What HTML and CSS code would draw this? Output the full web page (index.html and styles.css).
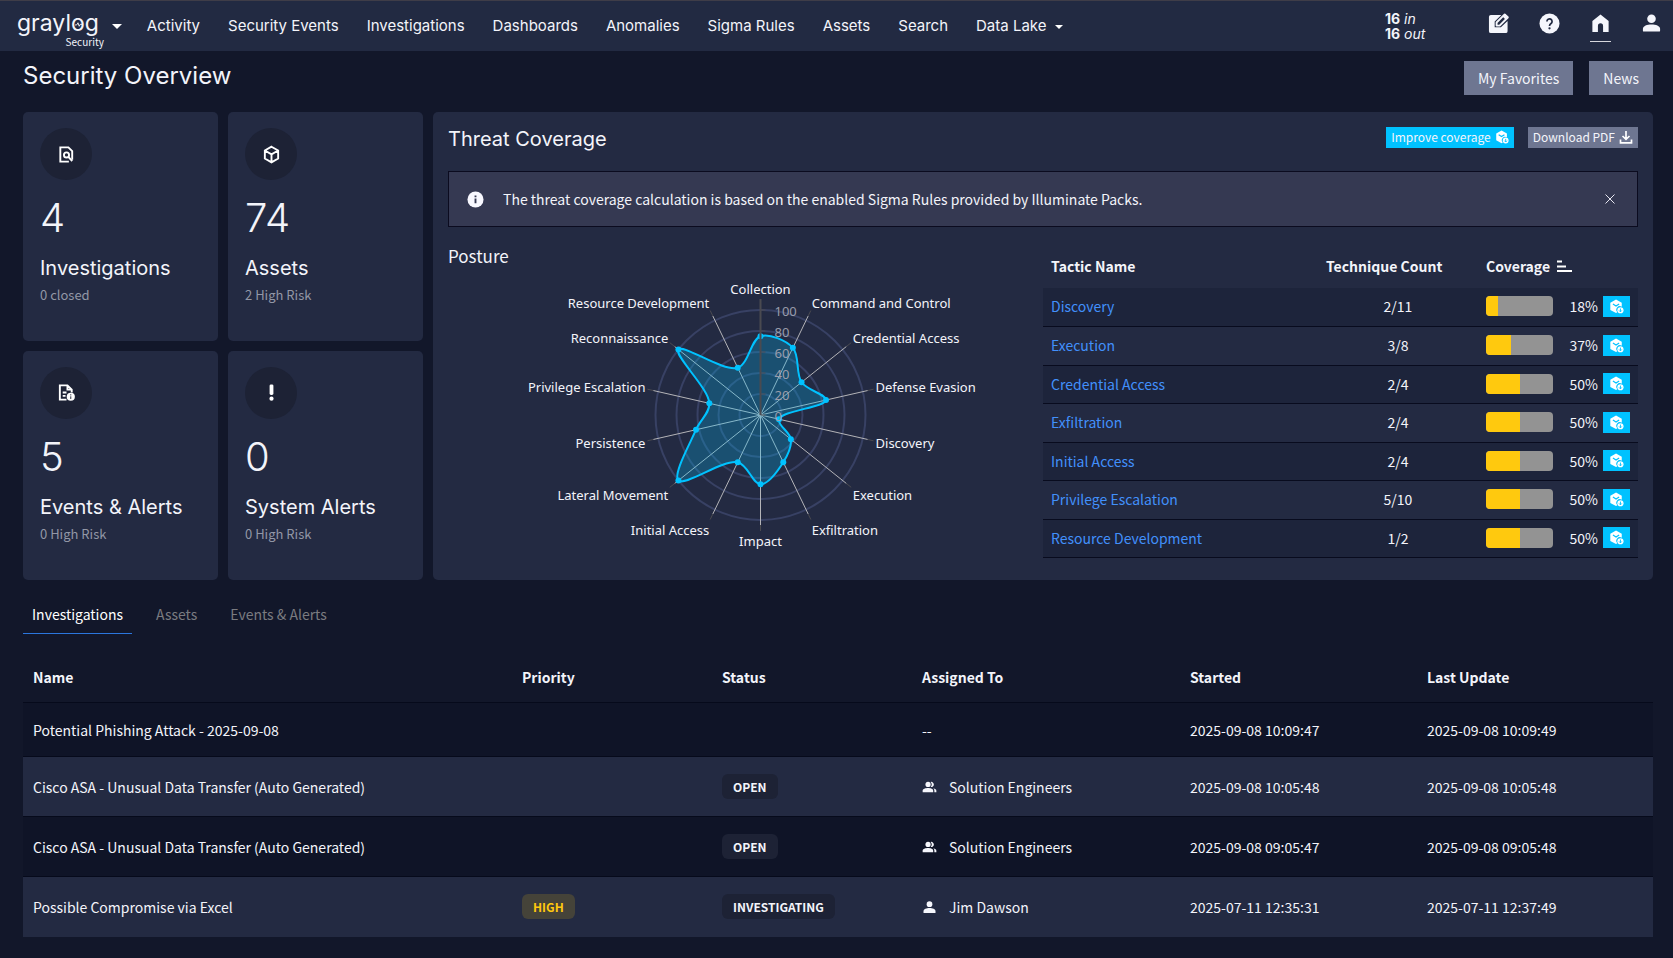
FILE: index.html
```html
<!DOCTYPE html>
<html lang="en">
<head>
<meta charset="utf-8">
<title>Security Overview</title>
<link rel="stylesheet" href="styles.css">
</head>
<body>
<svg class="sprite" aria-hidden="true">
  <symbol id="pack" viewBox="0 0 16 16">
    <path fill="#fff" d="M7.500 0.600 13.600 4v4.300a3.800 3.800 0 0 0-4.700 5.900L7.500 15 1.400 11.600V4z"/>
    <path fill="none" stroke="#00c2ff" stroke-width="1.300" d="M4.200 5.400 7.500 7.400l3.300-2"/>
    <circle cx="12.200" cy="12" r="3.300" fill="#fff"/>
    <path fill="none" stroke="#00c2ff" stroke-width="1" d="M12.200 10.200v3.400M10.700 12.200l1.500 1.500 1.500-1.500"/>
  </symbol>
  <symbol id="group" viewBox="0 0 16 14">
    <circle cx="6.300" cy="4" r="3"/>
    <path d="M0 13v-1.700C0 9 3.300 8.100 6.300 8.100s6 .9 6 3.200V13z"/>
    <path d="M9.300 1.100a3 3 0 1 1 0 5.800 4.300 4.300 0 0 0 0-5.800zM12.500 8.500c2 .5 3.500 1.400 3.500 2.800V13h-2.300v-1.700c0-1.200-.5-2.100-1.200-2.800z"/>
  </symbol>
  <symbol id="person" viewBox="0 0 16 16">
    <circle cx="8" cy="4.200" r="3.800"/>
    <path d="M0 16v-2.600C0 10.600 4 9.200 8 9.200s8 1.400 8 4.200V16z"/>
  </symbol>
</svg>

<header class="topbar">
  <button class="brand" type="button">
    <span class="brand-mark">
      <span class="brand-name">graylog</span>
      <svg class="brand-pulse" viewBox="0 0 8 8" aria-hidden="true"><path d="M0 4.500h2L3.400 2l1.400 4L6 3.800h2"/></svg>
      <span class="brand-product">Security</span>
    </span>
    <span class="caret caret-lg"></span>
  </button>
  <nav class="nav">
    <a href="#">Activity</a>
    <a href="#">Security Events</a>
    <a href="#">Investigations</a>
    <a href="#">Dashboards</a>
    <a href="#">Anomalies</a>
    <a href="#">Sigma Rules</a>
    <a href="#">Assets</a>
    <a href="#">Search</a>
    <a href="#">Data Lake<span class="caret"></span></a>
  </nav>
  <div class="throughput">
    <div><b>16</b> <i>in</i></div>
    <div><b>16</b> <i>out</i></div>
  </div>
  <div class="tools">
    <button type="button" aria-label="Scratchpad"><svg viewBox="0 0 22 22"><path fill="#f5f6fc" d="M3 2h11L7 9v6h6.500L20.500 8.500V19a2 2 0 0 1-2 2H3a2 2 0 0 1-2-2V4a2 2 0 0 1 2-2z"/><path fill="none" stroke="#f5f6fc" stroke-width="2" stroke-linejoin="round" d="M9 13.200V10L17.500 1.500 20.700 4.700 12.200 13.200z"/><path fill="#f5f6fc" d="M15 3.500l3.500 3.500 3-3-3.500-3z"/></svg></button>
    <button type="button" aria-label="Help"><svg viewBox="0 0 22 22"><circle cx="11" cy="11" r="10.500" fill="#f5f6fc"/><path fill="none" stroke="#222a42" stroke-width="1.800" d="M8.300 8.800a2.700 2.700 0 1 1 4.300 2.200c-1 .7-1.600 1.200-1.600 2.500"/><circle cx="11" cy="16" r="1.200" fill="#222a42"/></svg></button>
    <button class="current" type="button" aria-label="Home"><svg viewBox="0 0 22 22"><path fill="#f5f6fc" d="M2.500 20V8.500L11 1.500l8.500 7V20h-5.800v-6.500a2.700 2.700 0 0 0-5.400 0V20z"/></svg></button>
    <button type="button" aria-label="User"><svg viewBox="0 0 22 22"><circle cx="11" cy="6" r="4.500" fill="#f5f6fc"/><path fill="#f5f6fc" d="M3 19.500a1 1 0 0 1-1-1v-2C2 13.500 6.500 12 11 12s9 1.500 9 4.500v2a1 1 0 0 1-1 1z"/></svg></button>
  </div>
</header>

<main class="page">
  <div class="page-head">
    <h1>Security Overview</h1>
    <div class="page-actions">
      <button class="btn" type="button">My Favorites</button>
      <button class="btn" type="button">News</button>
    </div>
  </div>

  <div class="overview">
    <section class="card">
      <span class="disc"><svg viewBox="0 0 20 20"><path d="M6.500 17.500h-3v-15h8.500l4 4v9M12.500 17.500h-7"/><circle cx="10" cy="10.500" r="2.700"/><path d="M12 12.500l4 4.500"/></svg></span>
      <div class="count">4</div>
      <h2>Investigations</h2>
      <p>0 closed</p>
    </section>
    <section class="card">
      <span class="disc"><svg viewBox="0 0 20 20"><path d="M10 1.800 17 5.800v8.400l-7 4-7-4V5.800zM3 5.800l7 4 7-4M10 9.800v8.400"/></svg></span>
      <div class="count">74</div>
      <h2>Assets</h2>
      <p>2 High Risk</p>
    </section>
    <section class="card">
      <span class="disc"><svg viewBox="0 0 20 20"><path d="M10 17.500H3v-15h8l4.500 4.500v3M11 2.500V7h4.500M6 10h4M6 13.500h3"/><circle class="solid" cx="14.500" cy="14.500" r="4.300"/><path class="cut" d="M14.500 14v2.800M14.500 11.800v1.300"/></svg></span>
      <div class="count">5</div>
      <h2>Events &amp; Alerts</h2>
      <p>0 High Risk</p>
    </section>
    <section class="card">
      <span class="disc"><svg viewBox="0 0 20 20"><rect class="solid" x="8" y="1.500" width="4" height="11" rx="1.500"/><circle class="solid" cx="10" cy="16.500" r="2.200"/></svg></span>
      <div class="count">0</div>
      <h2>System Alerts</h2>
      <p>0 High Risk</p>
    </section>

    <section class="panel">
      <div class="panel-head">
        <h2>Threat Coverage</h2>
        <div class="panel-actions">
          <button class="btn-sm accent" type="button">Improve coverage <svg><use href="#pack"/></svg></button>
          <button class="btn-sm" type="button">Download PDF <svg viewBox="0 0 14 14"><path fill="none" stroke="#fff" stroke-width="1.700" d="M7 1v8M3.500 6 7 9.300 10.500 6M1.500 9.500v3.300h11V9.500"/></svg></button>
        </div>
      </div>
      <div class="notice">
        <svg class="notice-icon" viewBox="0 0 18 18"><circle cx="9" cy="9" r="8.500" fill="#f8f8ff"/><path stroke="#353952" stroke-width="2" d="M9 8v5M9 4.700v2"/></svg>
        <span>The threat coverage calculation is based on the enabled Sigma Rules provided by Illuminate Packs.</span>
        <button class="notice-close" type="button" aria-label="Dismiss"><svg viewBox="0 0 10 10"><path d="M0.500 0.500l9 9M9.500 0.500l-9 9"/></svg></button>
      </div>
      <div class="coverage">
        <div class="posture">
          <h3>Posture</h3>
          <svg id="radar" class="radar" viewBox="0 0 595 291" role="img" aria-label="Posture"></svg>
        </div>
        <table class="tactics">
          <thead>
            <tr><th class="col-tactic">Tactic Name</th><th class="col-count">Technique Count</th><th class="col-cover">Coverage <svg class="sort" viewBox="0 0 16 12"><path d="M1 1.500h5M1 6.500h9M1 11h15"/></svg></th></tr>
          </thead>
          <tbody>
            <tr><td><a href="#">Discovery</a></td><td>2/11</td><td><div class="cover"><span class="bar"><span style="width:18%"></span></span><span class="pct">18%</span><button type="button" aria-label="Improve Discovery"><svg><use href="#pack"/></svg></button></div></td></tr>
            <tr><td><a href="#">Execution</a></td><td>3/8</td><td><div class="cover"><span class="bar"><span style="width:37%"></span></span><span class="pct">37%</span><button type="button" aria-label="Improve Execution"><svg><use href="#pack"/></svg></button></div></td></tr>
            <tr><td><a href="#">Credential Access</a></td><td>2/4</td><td><div class="cover"><span class="bar"><span style="width:50%"></span></span><span class="pct">50%</span><button type="button" aria-label="Improve Credential Access"><svg><use href="#pack"/></svg></button></div></td></tr>
            <tr><td><a href="#">Exfiltration</a></td><td>2/4</td><td><div class="cover"><span class="bar"><span style="width:50%"></span></span><span class="pct">50%</span><button type="button" aria-label="Improve Exfiltration"><svg><use href="#pack"/></svg></button></div></td></tr>
            <tr><td><a href="#">Initial Access</a></td><td>2/4</td><td><div class="cover"><span class="bar"><span style="width:50%"></span></span><span class="pct">50%</span><button type="button" aria-label="Improve Initial Access"><svg><use href="#pack"/></svg></button></div></td></tr>
            <tr><td><a href="#">Privilege Escalation</a></td><td>5/10</td><td><div class="cover"><span class="bar"><span style="width:50%"></span></span><span class="pct">50%</span><button type="button" aria-label="Improve Privilege Escalation"><svg><use href="#pack"/></svg></button></div></td></tr>
            <tr><td><a href="#">Resource Development</a></td><td>1/2</td><td><div class="cover"><span class="bar"><span style="width:50%"></span></span><span class="pct">50%</span><button type="button" aria-label="Improve Resource Development"><svg><use href="#pack"/></svg></button></div></td></tr>
          </tbody>
        </table>
      </div>
    </section>
  </div>

  <div class="tabs" role="tablist">
    <button class="tab active" type="button" role="tab" aria-selected="true">Investigations</button>
    <button class="tab" type="button" role="tab" aria-selected="false">Assets</button>
    <button class="tab" type="button" role="tab" aria-selected="false">Events &amp; Alerts</button>
  </div>

  <table class="cases">
    <colgroup><col class="c-name"><col class="c-prio"><col class="c-status"><col class="c-who"><col class="c-start"><col></colgroup>
    <thead>
      <tr><th>Name</th><th>Priority</th><th>Status</th><th>Assigned To</th><th>Started</th><th>Last Update</th></tr>
    </thead>
    <tbody>
      <tr class="short"><td>Potential Phishing Attack - 2025-09-08</td><td></td><td></td><td>--</td><td>2025-09-08 10:09:47</td><td>2025-09-08 10:09:49</td></tr>
      <tr><td>Cisco ASA - Unusual Data Transfer (Auto Generated)</td><td></td><td><span class="badge">OPEN</span></td><td><span class="who"><svg><use href="#group"/></svg>Solution Engineers</span></td><td>2025-09-08 10:05:48</td><td>2025-09-08 10:05:48</td></tr>
      <tr><td>Cisco ASA - Unusual Data Transfer (Auto Generated)</td><td></td><td><span class="badge">OPEN</span></td><td><span class="who"><svg><use href="#group"/></svg>Solution Engineers</span></td><td>2025-09-08 09:05:47</td><td>2025-09-08 09:05:48</td></tr>
      <tr><td>Possible Compromise via Excel</td><td><span class="badge high">HIGH</span></td><td><span class="badge">INVESTIGATING</span></td><td><span class="who"><svg><use href="#person"/></svg>Jim Dawson</span></td><td>2025-07-11 12:35:31</td><td>2025-07-11 12:37:49</td></tr>
    </tbody>
  </table>
</main>
<script src="chart.js"></script>
</body>
</html>
```

FILE: styles.css
```css
:root {
  --bg: #12172a;
  --surface: #232a42;
  --text: #f3f4fa;
  --muted: #9297a6;
  --accent: #00c2ff;
  --grey: #6e7691;
  --body: "Noto Sans CJK SC", "Noto Sans", sans-serif;
  --head: Inter, "Open Sans", sans-serif;
}
* { box-sizing: border-box; }
body {
  margin: 0;
  background: var(--bg);
  color: var(--text);
  font: 14px/20px var(--body);
}
h1, h2, h3, p { margin: 0; font-weight: 400; }
button { font: inherit; color: inherit; background: none; border: 0; padding: 0; cursor: pointer; }
a { color: inherit; text-decoration: none; }
svg { display: block; flex: none; }
table { border-collapse: collapse; }
th { text-align: left; font-weight: 700; }
.sprite { position: absolute; width: 0; height: 0; }

.topbar {
  display: flex;
  align-items: center;
  height: 51px;
  padding: 0 11px 0 17px;
  background: #222a42;
  border-top: 1px solid #3f3d48;
  font: 15px/20px var(--head);
}
.brand { display: flex; align-items: center; gap: 13px; margin-right: 25px; }
.brand-mark { position: relative; display: block; padding-top: 8px; }
.brand-name { display: block; font: 23px/24px var(--head); }
.brand-product { display: block; margin-right: -5px; text-align: right; font: 10px/14px var(--body); }
.brand-pulse { position: absolute; left: 58px; top: 18px; width: 7px; height: 7px; fill: none; stroke: #fff; stroke-width: 1; }
.caret { display: inline-block; border: 4px solid transparent; border-top-color: #fff; border-bottom: 0; margin-left: 9px; vertical-align: middle; }
.caret-lg { border-width: 5px 5px 0; margin: 0; }
.nav { display: flex; gap: 28px; white-space: nowrap; }
.throughput { margin-left: auto; margin-right: 59px; font: 14px/15px var(--head); width: 44px; white-space: nowrap; }
.tools { display: flex; gap: 30px; }
.tools button { width: 21px; height: 31px; padding: 0 0 5px; border-bottom: 1px solid transparent; }
.tools .current { border-color: #d6d6dc; }
.tools svg { width: 21px; height: 21px; }

.page { padding: 0 20px 20px 23px; }
.page-head { display: flex; justify-content: space-between; height: 61px; padding-top: 10px; }
h1 { font: 24px/30px var(--head); }
.page-actions { display: flex; gap: 16px; }
.btn { height: 34px; padding: 0 14px; background: var(--grey); font-size: 14px; }

.overview {
  display: grid;
  grid-template-columns: 195fr 195fr 1220fr;
  grid-template-rows: 1fr 1fr;
  gap: 10px;
}
.card, .panel { background: var(--surface); border-radius: 5px; min-width: 0; }
.card { padding: 16px 17px; }
.disc { display: grid; place-items: center; width: 52px; height: 52px; border-radius: 50%; background: #1d2235; }
.disc svg { width: 19px; height: 19px; fill: none; stroke: #fff; stroke-width: 2; }
.disc .solid { fill: #fff; stroke: none; }
.disc .cut { stroke: #1d2235; stroke-width: 1; }
.count { font: 300 40px/48px var(--head); margin-top: 14px; }
.card h2 { font: 20px/28px var(--head); margin-top: 12px; }
.card p { color: var(--muted); font-size: 13px; margin-top: 3px; }

.panel { grid-column: 3; grid-row: 1 / 3; padding: 15px 15px 22px; }
.panel-head { display: flex; justify-content: space-between; align-items: flex-start; }
.panel-head h2 { font: 20px/24px var(--head); }
.panel-actions { display: flex; gap: 14px; }
.btn-sm { display: flex; align-items: center; gap: 4px; height: 21px; padding: 0 5px 1px; background: var(--grey); font-size: 12px; white-space: nowrap; }
.btn-sm.accent { background: var(--accent); }
.btn-sm svg { width: 14px; height: 14px; }
.notice {
  display: flex;
  align-items: center;
  height: 56px;
  margin-top: 20px;
  padding: 0 22px 0 18px;
  background: #353952;
  border: 1px solid #0b0b1f;
}
.notice span { flex: 1; }
.notice-icon { width: 17px; height: 17px; margin-right: 19px; }
.notice-close svg { width: 10px; height: 10px; stroke: #e6e6f0; stroke-width: 1; }
.coverage { display: grid; grid-template-columns: 1fr 1fr; margin-top: 19px; }
h3 { font-size: 17px; line-height: 20px; }
.radar { width: 100%; height: auto; }

.tactics { width: 100%; table-layout: fixed; }
.tactics th, .tactics td { padding: 0 8px; }
.tactics td { padding-bottom: 1px; }
.tactics th { height: 42px; padding-bottom: 2px; }
.col-count, .col-cover { width: 160px; }
.tactics td:nth-child(2) { text-align: center; }
.tactics tbody tr { height: 38px; border-bottom: 1px solid #080b1e; }
.tactics tbody tr:nth-child(odd) { background: #1d243b; }
.tactics tbody tr:nth-child(even) { height: 39px; }
.tactics a { color: #4290fb; }
.sort { display: inline-block; width: 16px; height: 12px; margin-left: 3px; stroke: #fff; stroke-width: 2; }
.cover { display: flex; align-items: center; }
.bar { width: 67px; height: 20px; border-radius: 4px; background: #939393; overflow: hidden; }
.bar span { display: block; height: 100%; background: #ffc90e; }
.pct { flex: 1; text-align: right; padding-right: 5px; }
.cover button { display: grid; place-items: center; width: 27px; height: 21px; background: var(--accent); }
.cover button svg { width: 15px; height: 15px; }

.tabs { display: flex; gap: 15px; margin-top: 16px; }
.tab { height: 38px; padding: 0 9px; color: #7a7b80; border-bottom: 1px solid transparent; }
.tab.active { color: #fff; border-color: #2b76dd; }

.cases { width: 100%; margin-top: 20px; table-layout: fixed; }
.cases th, .cases td { padding: 0 10px; }
.cases th { height: 49px; padding-bottom: 1px; }
.cases tr { border-bottom: 1px solid #060a1b; }
.cases tbody tr { height: 60px; }
.cases tbody tr.short { height: 54px; }
.cases tbody tr:nth-child(odd) { background: #0f1427; }
.cases tbody tr:nth-child(even) { background: var(--surface); }
.cases tbody tr:last-child { border-bottom: 0; }
.c-name { width: 30%; }
.c-prio, .c-status { width: 200px; }
.c-who { width: 268px; }
.c-start { width: 237px; }
.badge { display: inline-block; padding: 0 11px; border-radius: 6px; background: #1d2235; font-weight: 700; font-size: 12px; line-height: 25px; }
.badge.high { background: #454339; color: #ffc90e; }
.who { display: flex; align-items: center; gap: 12px; }
.who svg { width: 15px; height: 12px; fill: #f5f6fc; }

.radar text { font: 13px "Noto Sans", sans-serif; fill: #f3f4fa; }
.radar .tick { fill: #9a9dab; }
.radar .ring { fill: none; stroke: #384164; stroke-width: 2; }
.radar .spoke { stroke: #b4b4b8; stroke-width: 1; }
.radar .axis { stroke: #4a4a50; stroke-width: 1; }
.radar .area { fill: #00c2ff; fill-opacity: 0.25; stroke: #00c2ff; stroke-width: 2; }
.radar .dot { fill: #00c2ff; }
```

FILE: chart.js
```js
const tactics = [
  ["Collection", 75], ["Command and Control", 71], ["Credential Access", 50],
  ["Defense Evasion", 64], ["Discovery", 18], ["Execution", 37],
  ["Exfiltration", 50], ["Impact", 66], ["Initial Access", 50],
  ["Lateral Movement", 100], ["Persistence", 63], ["Privilege Escalation", 50],
  ["Reconnaissance", 100], ["Resource Development", 50]
];
const svg = document.getElementById("radar");
const CX = 312.5, CY = 149, R = 105, OUTER = 116;

function add(name, attrs, text) {
  const el = document.createElementNS("http://www.w3.org/2000/svg", name);
  for (const key in attrs) el.setAttribute(key, attrs[key]);
  if (text !== undefined) el.textContent = text;
  svg.appendChild(el);
}
function at(i, r) {
  const a = 2 * Math.PI * i / tactics.length;
  return [CX + r * Math.sin(a), CY - r * Math.cos(a)];
}
function line(cls, a, b) {
  add("line", { class: cls, x1: a[0], y1: a[1], x2: b[0], y2: b[1] });
}

for (let v = 20; v <= 100; v += 20) add("circle", { class: "ring", cx: CX, cy: CY, r: R * v / 100 });
tactics.forEach((t, i) => {
  line("spoke", [CX, CY], at(i, 110));
  line("axis", at(i, 110), at(i, OUTER));
});

// Closed centripetal Catmull-Rom curve through the values
const pts = tactics.map((t, i) => at(i, R * t[1] / 100));
const n = pts.length;
const handles = pts.map((p, i) => {
  const a = pts[(i + n - 1) % n], b = pts[(i + 1) % n];
  const d1 = [a[0] - p[0], a[1] - p[1]], d2 = [b[0] - p[0], b[1] - p[1]];
  const l1 = Math.sqrt(Math.hypot(...d1)), l2 = Math.sqrt(Math.hypot(...d2));
  const m = [0, 1].map(k => l2 * l2 * d1[k] - l1 * l1 * d2[k]);
  const q1 = 3 * l2 * (l1 + l2), q2 = 3 * l1 * (l1 + l2);
  return [[p[0] + m[0] / q1, p[1] + m[1] / q1], [p[0] - m[0] / q2, p[1] - m[1] / q2]];
});
let d = "M" + pts[0];
for (let i = 0; i < n; i++) {
  const j = (i + 1) % n;
  d += "C" + handles[i][1] + " " + handles[j][0] + " " + pts[j];
}
add("path", { class: "area", d: d + "Z" });
pts.forEach(p => add("circle", { class: "dot", cx: p[0], cy: p[1], r: 3 }));

// The value axis covers the spoke below it
add("line", { x1: CX, y1: CY, x2: CX, y2: CY - OUTER, stroke: "#4a4a50", "stroke-width": 2 });
for (let v = 0; v <= 100; v += 20) {
  const y = CY - R * v / 100;
  line("axis", [CX, y], [CX + 5, y]);
  add("text", { class: "tick", x: CX + 14, y: y + 6 }, v);
}

// Labels sit a little further out below the centre than above it
tactics.forEach((t, i) => {
  const x = at(i, 118)[0];
  const centred = Math.abs(x - CX) < 1;
  const reach = centred ? 126 : at(i, 1)[1] > CY ? 128 : 124;
  const anchor = centred ? "middle" : x > CX ? "start" : "end";
  add("text", { x: x, y: at(i, reach)[1] + 5, "text-anchor": anchor }, t[0]);
});
```
